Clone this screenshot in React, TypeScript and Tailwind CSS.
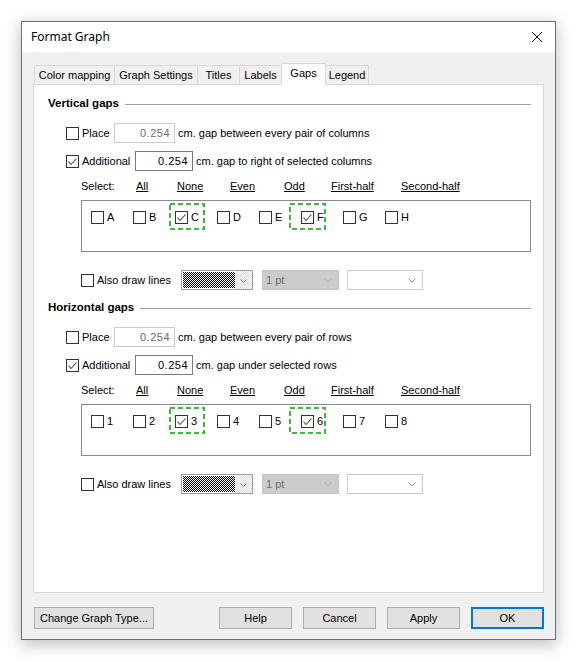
import React from "react";

function Check({ checked }: { checked?: boolean }) {
  return (
    <span className="flex h-[13px] w-[13px] shrink-0 items-center justify-center border border-[#333333] bg-white">
      {checked && (
        <svg width="11" height="11" viewBox="0 0 11 11">
          <path d="M1.5 5.5L4 8.5L9.5 2.5" fill="none" stroke="#4d4d4d" strokeWidth="1.1" />
        </svg>
      )}
    </span>
  );
}

function Chevron({ color }: { color: string }) {
  return (
    <svg width="8" height="5" viewBox="0 0 8 5">
      <path d="M0.5 0.5L4 4L7.5 0.5" fill="none" stroke={color} strokeWidth="1" />
    </svg>
  );
}

function PatternCombo({ id }: { id: string }) {
  return (
    <span className="flex h-[20px] w-[72px] border border-[#a0a0a0] bg-white">
      <svg width="70" height="18" viewBox="0 0 70 18" shapeRendering="crispEdges">
        <defs>
          <pattern id={`${id}b`} width="2" height="2" patternUnits="userSpaceOnUse">
            <rect x="0" y="0" width="2" height="2" fill="#ffffff" />
            <rect x="0" y="0" width="1" height="1" fill="#000000" />
            <rect x="1" y="1" width="1" height="1" fill="#000000" />
          </pattern>
          <pattern id={`${id}l`} width="2" height="2" patternUnits="userSpaceOnUse">
            <rect x="0" y="0" width="2" height="2" fill="#ffffff" />
            <rect x="0" y="0" width="1" height="1" fill="#dcdcdc" />
            <rect x="1" y="1" width="1" height="1" fill="#dcdcdc" />
          </pattern>
        </defs>
        <rect x="0" y="0" width="70" height="18" fill="#ffffff" />
        <rect x="1" y="1" width="52" height="16" fill={`url(#${id}b)`} />
        <rect x="53" y="0" width="17" height="18" fill={`url(#${id}l)`} />
        <path d="M58.5 8.5L61.5 11.5L64.5 8.5" fill="none" stroke="#6a6a6a" strokeWidth="1" shapeRendering="auto" />
      </svg>
    </span>
  );
}

function Focus({ left, width }: { left: number; width: number }) {
  return (
    <svg
      className="pointer-events-none absolute top-[-8px]"
      style={{ left: left }}
      width={width}
      height={27}
      viewBox={`0 0 ${width} 27`}
    >
      <rect
        x="1"
        y="1"
        width={width - 2}
        height={25}
        fill="none"
        stroke="#3fb83f"
        strokeWidth="2"
        strokeDasharray="5 3"
        shapeRendering="crispEdges"
      />
    </svg>
  );
}

function Section({
  title,
  noun,
  addText,
  items,
  id,
}: {
  title: string;
  noun: string;
  addText: string;
  items: string[];
  id: string;
}) {
  return (
    <div className="flex flex-col">
      <div className="flex h-[16px] items-center">
        <span className="text-[11.5px] font-bold">{title}</span>
        <span className="ml-[6px] h-px flex-1 bg-[#a0a0a0]" />
      </div>
      <div className="mt-[11px] flex h-[20px] items-center pl-[18px]">
        <Check />
        <span className="ml-[3px] w-[32px]">Place</span>
        <span className="flex h-[20px] w-[61px] items-center justify-end border border-[#cccccc] bg-white pr-[4px] tracking-[0.5px] text-[#6d6d6d]">
          0.254
        </span>
        <span className="ml-[3px]">cm. gap between every pair of {noun}</span>
      </div>
      <div className="mt-[8px] flex h-[20px] items-center pl-[18px]">
        <Check checked />
        <span className="ml-[3px] w-[53px]">Additional</span>
        <span className="flex h-[20px] w-[58px] items-center justify-end border border-[#7a7a7a] bg-white pr-[4px] tracking-[0.5px]">
          0.254
        </span>
        <span className="ml-[3px]">{addText}</span>
      </div>
      <div className="mt-[7px] flex h-[16px] items-center pl-[33px]">
        <span className="w-[55px]">Select:</span>
        <span className="w-[41px] underline">All</span>
        <span className="w-[53px] underline">None</span>
        <span className="w-[54px] underline">Even</span>
        <span className="w-[47px] underline">Odd</span>
        <span className="w-[70px] underline">First-half</span>
        <span className="underline">Second-half</span>
      </div>
      <div className="ml-[33px] mt-[6px] h-[52px] border border-[#8a8a8a] pl-[9px] pt-[10px]">
        <div className="flex">
          {items.map((it, i) => (
            <div key={it} className="relative flex h-[13px] w-[42px] items-center">
              <Check checked={i === 2 || i === 5} />
              <span className="ml-[3px]">{it}</span>
              {i === 2 && <Focus left={-6} width={36} />}
              {i === 5 && <Focus left={-12} width={37} />}
            </div>
          ))}
        </div>
      </div>
      <div className="mt-[18px] flex h-[20px] items-center pl-[33px]">
        <div className="flex w-[100px] items-center">
          <Check />
          <span className="ml-[3px]">Also draw lines</span>
        </div>
        <PatternCombo id={id} />
        <span className="ml-[9px] flex h-[20px] w-[77px] items-center justify-between border border-[#c4c4c4] bg-[#cccccc] pl-[3px] pr-[6px] text-[#6d6d6d]">
          <span>1 pt</span>
          <Chevron color="#a8a8a8" />
        </span>
        <span className="ml-[8px] flex h-[20px] w-[76px] items-center justify-end border border-[#cccccc] bg-white pr-[6px]">
          <Chevron color="#8a8a8a" />
        </span>
      </div>
    </div>
  );
}

function Btn({ children, w, primary }: { children: React.ReactNode; w: string; primary?: boolean }) {
  return (
    <span
      className={`flex h-[22px] items-center justify-center bg-[#e1e1e1] ${w} ${
        primary ? "border-2 border-[#0078d7]" : "border border-[#adadad]"
      }`}
    >
      {children}
    </span>
  );
}

export default function App() {
  return (
    <div className="h-[662px] w-[577px] bg-white pl-[21px] pt-[21px] font-['Liberation_Sans',Arial,sans-serif] text-[11px] leading-none text-black">
      <div className="flex h-[619px] w-[535px] flex-col border border-[#6e6e6e] bg-[#f0f0f0] shadow-[0_4px_16px_rgba(0,0,0,0.28)]">
        <div className="flex h-[30px] items-center justify-between bg-white pl-[9px] pr-[9px]">
          <span className="font-['Noto_Sans',sans-serif] text-[12px]">Format Graph</span>
          <svg width="12" height="12" viewBox="0 0 12 12" className="mr-[3px]">
            <path d="M1 1L11 11M11 1L1 11" stroke="#111" strokeWidth="1" />
          </svg>
        </div>
        <div className="flex flex-1 flex-col px-[11px] pt-[11px]">
          <div className="flex h-[21px] items-end pl-px">
            <span className="flex h-[19px] w-[81px] items-center justify-center border border-b-0 border-[#d9d9d9] bg-[#f0f0f0]">
              Color mapping
            </span>
            <span className="-ml-px flex h-[19px] w-[84px] items-center justify-center border border-b-0 border-[#d9d9d9] bg-[#f0f0f0]">
              Graph Settings
            </span>
            <span className="-ml-px flex h-[19px] w-[43px] items-center justify-center border border-b-0 border-[#d9d9d9] bg-[#f0f0f0]">
              Titles
            </span>
            <span className="-ml-px flex h-[19px] w-[43px] items-center justify-center border border-b-0 border-[#d9d9d9] bg-[#f0f0f0]">
              Labels
            </span>
            <span className="relative z-10 -mb-px -ml-px flex h-[22px] w-[45px] items-start justify-center border border-b-0 border-[#d9d9d9] bg-white pt-[4px]">
              Gaps
            </span>
            <span className="-ml-px flex h-[19px] w-[44px] items-center justify-center border border-b-0 border-[#d9d9d9] bg-[#f0f0f0]">
              Legend
            </span>
          </div>
          <div className="h-[509px] border border-[#d9d9d9] bg-white pl-[14px] pr-[12px] pt-[11px]">
            <Section
              title="Vertical gaps"
              noun="columns"
              addText="cm. gap to right of selected columns"
              items={["A", "B", "C", "D", "E", "F", "G", "H"]}
              id="pv"
            />
            <div className="mt-[10px]">
              <Section
                title="Horizontal gaps"
                noun="rows"
                addText="cm. gap under selected rows"
                items={["1", "2", "3", "4", "5", "6", "7", "8"]}
                id="ph"
              />
            </div>
          </div>
          <div className="mt-[14px] flex items-center pl-px">
            <Btn w="w-[120px]">Change Graph Type...</Btn>
            <div className="flex-1" />
            <div className="flex gap-[11px]">
              <Btn w="w-[73px]">Help</Btn>
              <Btn w="w-[73px]">Cancel</Btn>
              <Btn w="w-[73px]">Apply</Btn>
              <Btn w="w-[73px]" primary>
                OK
              </Btn>
            </div>
          </div>
        </div>
      </div>
    </div>
  );
}
